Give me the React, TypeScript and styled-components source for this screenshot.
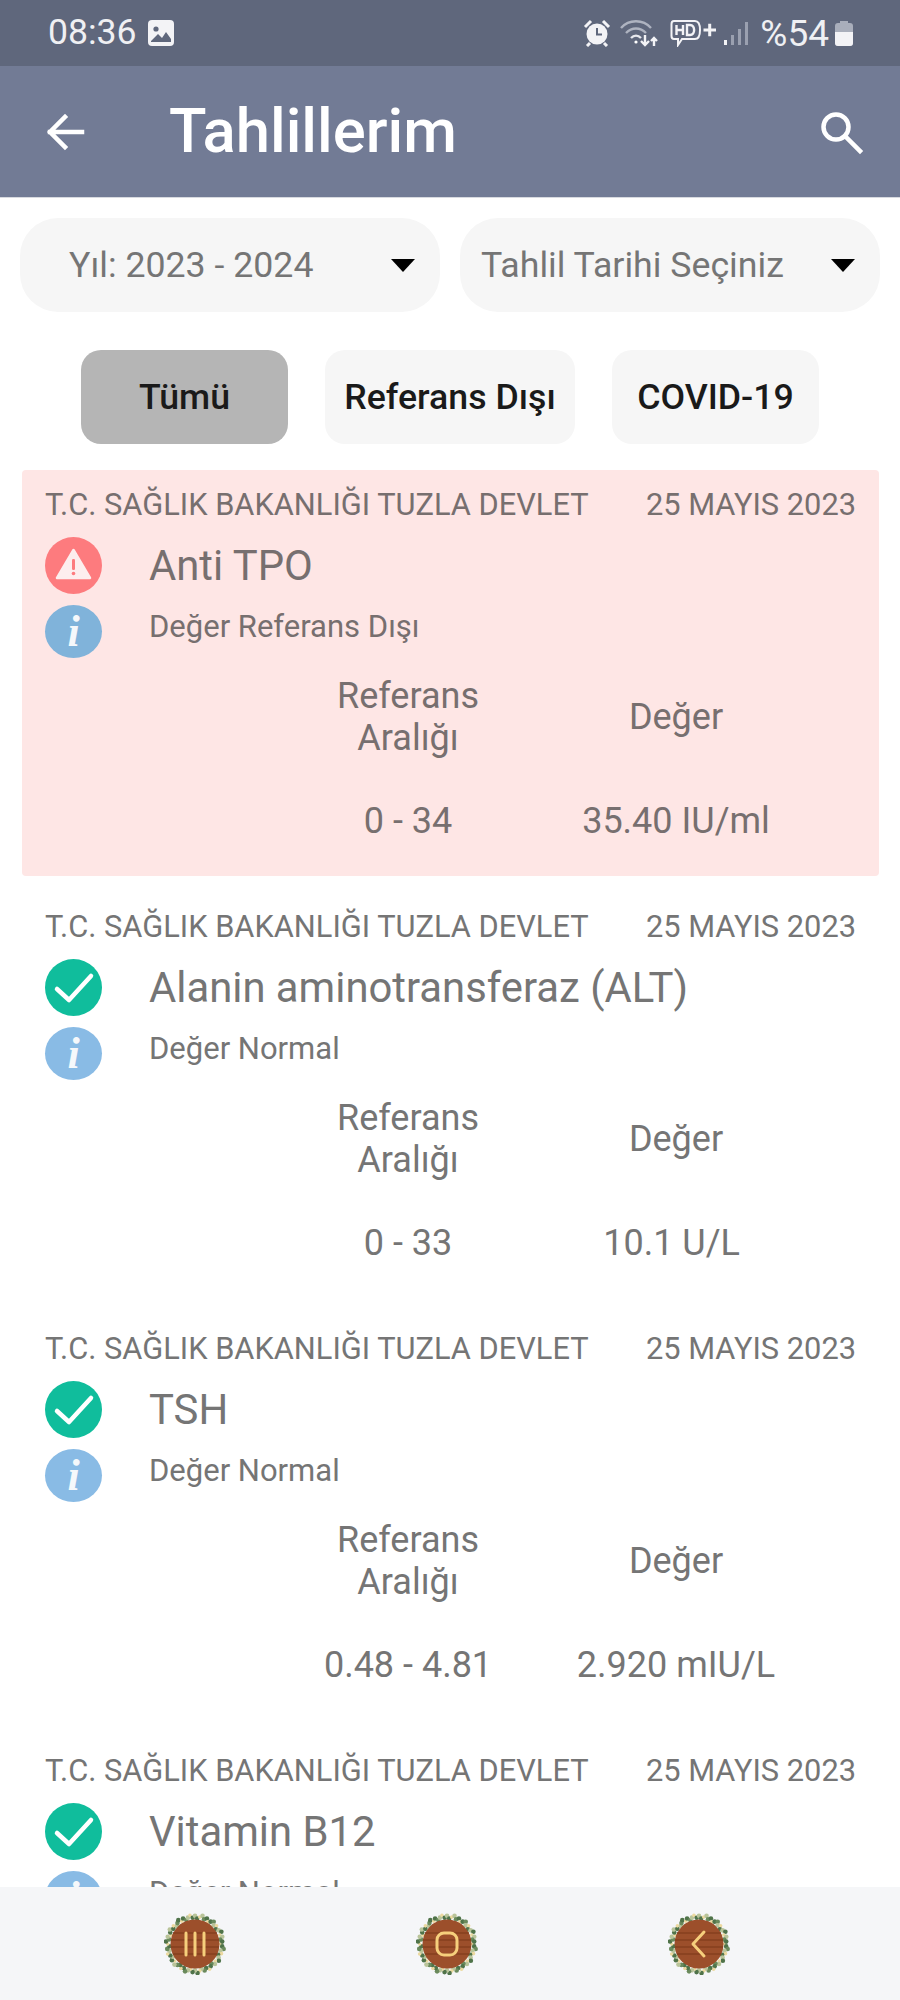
import React from "react";
import styled, { createGlobalStyle } from "styled-components";

const Global = createGlobalStyle`
  html, body { margin: 0; padding: 0; background: #fff; }
  body { font-family: Roboto, "Noto Sans", sans-serif; }
`;

const Screen = styled.div`
  width: 900px; height: 2000px; display: flex; flex-direction: column; overflow: hidden; background: #fff;
`;
const StatusBar = styled.div`
  height: 66px; flex: none; background: #5f677c; color: #eff0f3; display: flex; align-items: center;
  padding: 0 47px 0 48px; font-size: 35.6px; line-height: 1;
`;
const Time = styled.span` width: 88px; `;
const StatusSpacer = styled.div` flex: 1; `;
const StatusIcons = styled.div` display: flex; align-items: center; gap: 9px; `;
const Percent = styled.span` font-size: 37px; margin-left: 2px; `;
const Header = styled.header`
  height: 132px; flex: none; background: #727b95; color: #fff; display: flex; align-items: center; padding: 0 36px 0 45px;
  border-bottom: 1px solid #d8dae0; box-sizing: border-box;
`;
const Title = styled.h1`
  margin: 0 0 0 82px; flex: 1; font-size: 61.6px; font-weight: 500; line-height: 1;
`;
const Selects = styled.div`
  display: grid; grid-template-columns: 1fr 1fr; gap: 20px; padding: 20px 20px 0; flex: none;
`;
const Select = styled.div<{ $pad: number }>`
  min-width: 0; box-sizing: border-box; height: 94px; background: #f6f6f6; border-radius: 38px; display: flex; align-items: center;
  justify-content: space-between; padding: 0 25px 0 ${(p) => p.$pad}px; color: #757575; font-size: 35.7px; white-space: nowrap;
`;
const Caret = styled.span`
  width: 0; height: 0; border-left: 12px solid transparent; border-right: 12px solid transparent; border-top: 13px solid #000;
`;
const Filters = styled.div`
  display: flex; justify-content: center; gap: 37px; padding: 38px 0 0; flex: none;
`;
const Filter = styled.div<{ $active?: boolean; $w: number }>`
  width: ${(p) => p.$w}px; height: 94px; border-radius: 20px; display: flex; align-items: center; justify-content: center;
  background: ${(p) => (p.$active ? "#b5b5b5" : "#f6f6f6")}; color: #1a1a1a; font-size: 35.7px; font-weight: 500;
`;
const List = styled.div`
  flex: 1; min-height: 0; overflow: hidden; padding: 26px 21px 0 22px;
`;
const Card = styled.article<{ $alert?: boolean }>`
  height: 406px; box-sizing: border-box; padding: 15px 23px 0 23px; margin-bottom: 16px; border-radius: 4px;
  background: ${(p) => (p.$alert ? "#fee6e5" : "#fff")}; color: ${(p) => (p.$alert ? "#776f6f" : "#757575")};
`;
const SourceRow = styled.div`
  display: flex; justify-content: space-between; font-size: 30.8px; line-height: 40px; white-space: nowrap;
`;
const IconRow = styled.div<{ $gap: number; $h: number }>`
  display: flex; align-items: center; gap: 47px; margin-top: ${(p) => p.$gap}px; height: ${(p) => p.$h}px;
`;
const TestName = styled.div` font-size: 41.8px; `;
const TestState = styled.div` font-size: 31px; padding-bottom: 10px; `;
const Badge = styled.span`
  width: 57px; height: 57px; flex: none; display: block;
`;
const InfoBadge = styled.span<{ $alert?: boolean }>`
  width: 57px; height: 53px; flex: none; border-radius: 50%; background: ${(p) => (p.$alert ? "#80b3da" : "#89bbe5")};
  color: #f5f8fb; display: flex; align-items: center; justify-content: center;
  font: italic 700 44px/1 "Liberation Serif", serif;
`;
const ValueGrid = styled.div`
  display: grid; grid-template-columns: 268px 268px; justify-content: end; margin: 17px 46px 0 0; text-align: center;
  font-size: 36px; line-height: 42px;
`;
const HeadCell = styled.div`
  height: 84px; display: flex; align-items: center; justify-content: center;
`;
const ValueCell = styled.div` margin-top: 41px; `;
const NavWrap = styled.div` background: #f5f6f8; flex: none; height: 113px; overflow: hidden; `;
const BottomNav = styled.nav`
  height: 113px; display: grid; grid-template-columns: repeat(3, 252px);
  justify-content: center; justify-items: center; align-items: center; padding-right: 6px;
`;

const Check = () => (
  <Badge>
    <svg width="57" height="57" viewBox="0 0 57 57">
      <circle cx="28.5" cy="28.5" r="28.5" fill="#10bd9c" />
      <path d="M12 30 L24 41 L46 17" fill="none" stroke="#fff" strokeWidth="4.5" strokeLinecap="round" strokeLinejoin="round" />
    </svg>
  </Badge>
);
const Warn = () => (
  <Badge>
    <svg width="57" height="57" viewBox="0 0 57 57">
      <circle cx="28.5" cy="28.5" r="28.5" fill="#fd7b7e" />
      <path d="M28.5 13 L45 41 H12 Z" fill="#fdeeee" stroke="#fdeeee" strokeWidth="2.5" strokeLinejoin="round" />
      <rect x="27" y="22" width="3" height="11" rx="1.2" fill="#fd7b7e" />
      <circle cx="28.5" cy="36.5" r="1.8" fill="#fd7b7e" />
    </svg>
  </Badge>
);

const leaves = Array.from({ length: 72 }, (_, i) => {
  const a = (i / 72) * Math.PI * 2;
  const r = 25.5 + ((i * 7) % 5) * 0.9;
  const c = i % 4 === 0 ? "#ecd9a0" : i % 3 === 0 ? "#b9c49a" : i % 2 ? "#4f7349" : "#6a8a5c";
  return { x: 31 + Math.cos(a) * r, y: 31 + Math.sin(a) * r, c };
});
const Wreath = ({ children }: { children: React.ReactNode }) => (
  <svg width="62" height="62" viewBox="0 0 62 62">
    {leaves.map((l, i) => (
      <circle key={i} cx={l.x} cy={l.y} r={i % 4 === 0 ? 1.8 : 2.3} fill={l.c} />
    ))}
    <circle cx="31" cy="31" r="24.5" fill="#9c4f2b" />
    <path d="M9 20H53M7 27H55M7 34H55M9 41H53" stroke="#85401f" strokeWidth="1.4" />
    <g fill="none" stroke="#f6cf7c" strokeWidth="3" strokeLinecap="round" strokeLinejoin="round">{children}</g>
  </svg>
);

const Arrow = () => (
  <svg width="42" height="42" viewBox="0 0 42 42" fill="none" stroke="#fff" strokeWidth="4.5" strokeLinecap="square">
    <path d="M5 21H37M20 6L5 21L20 36" />
  </svg>
);
const Search = () => (
  <svg width="46" height="46" viewBox="0 0 46 46" fill="none" stroke="#fff" strokeWidth="4.5">
    <circle cx="18" cy="18" r="12.5" />
    <path d="M27 27L42 42" strokeLinecap="square" />
  </svg>
);

const items = [
  { name: "Anti TPO", state: "Değer Referans Dışı", ref: "0 - 34", val: "35.40 IU/ml", alert: true },
  { name: "Alanin aminotransferaz (ALT)", state: "Değer Normal", ref: "0 - 33", val: "10.1 U/L\u00a0" },
  { name: "TSH", state: "Değer Normal", ref: "0.48 - 4.81", val: "2.920 mIU/L" },
  { name: "Vitamin B12", state: "Değer Normal", ref: "", val: "" },
];

export default function App() {
  return (
    <Screen>
      <Global />
      <StatusBar>
        <Time>08:36</Time>
        <svg width="26" height="26" viewBox="0 0 26 26" style={{ marginLeft: 12 }}>
          <rect width="26" height="26" rx="4" fill="#f3f3f6" />
          <circle cx="8" cy="9" r="2.6" fill="#5f677c" />
          <path d="M3 21 L10 14 L14 18 L18 12 L23 19 V22 H3Z" fill="#5f677c" />
        </svg>
        <StatusSpacer />
        <StatusIcons>
          <svg width="28" height="28" viewBox="0 0 28 28">
            <circle cx="14" cy="15" r="10.5" fill="#f3f3f6" />
            <path d="M14 9V15.5H19" stroke="#5f677c" strokeWidth="2" fill="none" />
            <path d="M2 8 L8 2 M26 8 L20 2 M7 24 L4 27 M21 24 L24 27" stroke="#f3f3f6" strokeWidth="3" />
          </svg>
          <svg width="38" height="28" viewBox="0 0 38 28" fill="none" stroke="#aeb3c0" strokeWidth="2.4">
            <path d="M1 9C9 0 23 0 31 9" />
            <path d="M6 14C12 8 20 8 26 14" />
            <path d="M11 19C14 16 18 16 21 19" stroke="#e8e9ee" />
            <circle cx="16" cy="23" r="1.6" fill="#fff" stroke="none" />
            <path d="M25 16V26M21 22L25 26L29 22" stroke="#f3f3f6" />
            <path d="M34 27V19M31 22L34 19L37 22" stroke="#f3f3f6" />
          </svg>
          <svg width="47" height="28" viewBox="0 0 47 28" style={{ marginLeft: 3, marginRight: -3 }}>
            <path d="M4 2H25C29 2 30 6 30 11C30 16 29 20 25 20H12L8 26V20H4C2 20 1.5 19 1.5 17V5C1.5 3 2 2 4 2Z" fill="none" stroke="#f3f3f6" strokeWidth="2" />
            <path d="M6.5 6V16M13 6V16M6.5 11H13M17 6V16H20C25.5 16 25.5 6 20 6Z" stroke="#f3f3f6" strokeWidth="2.4" fill="none" />
            <path d="M33.5 11H46M39.7 4.8V17.2" stroke="#f3f3f6" strokeWidth="3" />
          </svg>
          <svg width="26" height="26" viewBox="0 0 26 26" fill="#9aa0b0">
            <rect x="1" y="20" width="3" height="5" fill="#f3f3f6" />
            <rect x="8" y="15" width="3" height="10" />
            <rect x="15" y="9" width="3" height="16" />
            <rect x="22" y="2" width="3" height="23" />
          </svg>
          <Percent>%54</Percent>
          <svg width="18" height="26" viewBox="0 0 18 26" style={{ marginLeft: -3 }}>
            <path d="M5 1H13V3H15C17 3 18 4 18 6V23C18 25 17 26 15 26H3C1 26 0 25 0 23V6C0 4 1 3 3 3H5Z" fill="#a9aebb" />
            <path d="M0 12H18V23C18 25 17 26 15 26H3C1 26 0 25 0 23Z" fill="#f3f3f6" />
          </svg>
        </StatusIcons>
      </StatusBar>
      <Header>
        <Arrow />
        <Title>Tahlillerim</Title>
        <Search />
      </Header>
      <Selects>
        <Select $pad={49}>Yıl: 2023 - 2024<Caret /></Select>
        <Select $pad={21}>Tahlil Tarihi Seçiniz<Caret /></Select>
      </Selects>
      <Filters>
        <Filter $active $w={207}>Tümü</Filter>
        <Filter $w={250}>Referans Dışı</Filter>
        <Filter $w={207}>COVID-19</Filter>
      </Filters>
      <List>
        {items.map((it) => (
          <Card key={it.name} $alert={it.alert}>
            <SourceRow>
              <span>T.C. SAĞLIK BAKANLIĞI TUZLA DEVLET</span>
              <span>25 MAYIS 2023</span>
            </SourceRow>
            <IconRow $gap={12} $h={57}>
              {it.alert ? <Warn /> : <Check />}
              <TestName>{it.name}</TestName>
            </IconRow>
            <IconRow $gap={11} $h={53}>
              <InfoBadge $alert={it.alert}>i</InfoBadge>
              <TestState>{it.state}</TestState>
            </IconRow>
            <ValueGrid>
              <HeadCell>Referans<br />Aralığı</HeadCell>
              <HeadCell>Değer</HeadCell>
              <ValueCell>{it.ref}</ValueCell>
              <ValueCell>{it.val}</ValueCell>
            </ValueGrid>
          </Card>
        ))}
      </List>
      <NavWrap>
        <BottomNav>
          <Wreath><path d="M22 20V42M31 20V42M40 20V42" /></Wreath>
          <Wreath><rect x="21" y="20" width="20" height="22" rx="7" /></Wreath>
          <Wreath><path d="M36 19L25 31L36 43" /></Wreath>
        </BottomNav>
      </NavWrap>
    </Screen>
  );
}
